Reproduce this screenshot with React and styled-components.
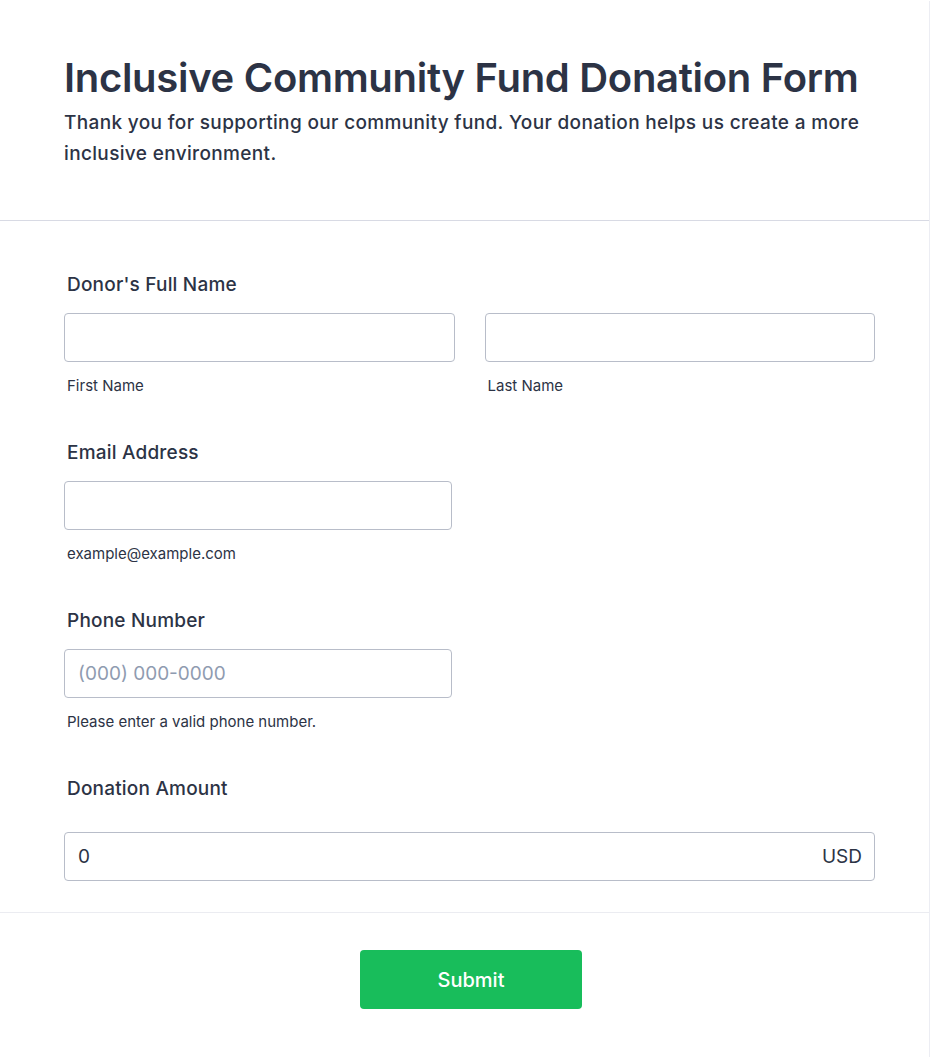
import React, { useState } from "react";
import styled, { createGlobalStyle } from "styled-components";

const GlobalStyle = createGlobalStyle`
  html, body {
    margin: 0;
    padding: 0;
    background: #ffffff;
  }
  * {
    box-sizing: border-box;
  }
  body {
    font-family: Inter, "Noto Sans", "Liberation Sans", sans-serif;
    color: #2c3345;
  }
`;

const Card = styled.div`
  width: 929px;
  min-height: 1057px;
  background: #fff;
  box-shadow: 1px 1px 0 #ecedf3;
`;

const Header = styled.header`
  padding: 54px 64px 51px;
  border-bottom: 1px solid #d8dae4;
`;

const Title = styled.h1`
  margin: 0;
  font-size: 40px;
  line-height: 48px;
  font-weight: 600;
  letter-spacing: -0.3px;
  color: #2c3345;
`;

const Subtitle = styled.p`
  margin: 5px 0 0;
  font-size: 19px;
  line-height: 31px;
  font-weight: 500;
  letter-spacing: 0.35px;
  color: #2c3345;
`;

const Body = styled.div`
  padding: 52px 54px 31px 64px;
  display: flex;
  flex-direction: column;
  gap: 45px;
`;

const Field = styled.div`
  display: flex;
  flex-direction: column;
`;

const Label = styled.label`
  padding-left: 3px;
  font-size: 19px;
  line-height: 24px;
  font-weight: 500;
  letter-spacing: 0.2px;
  margin-bottom: ${(p) => (p.$wide ? "31px" : "16px")};
`;

const Row = styled.div`
  display: grid;
  grid-template-columns: 1fr 1fr;
  column-gap: 30px;
`;

const Cell = styled.div`
  display: flex;
  flex-direction: column;
  width: ${(p) => p.$width || "auto"};
`;

const Input = styled.input`
  width: 100%;
  height: 49px;
  border: 1px solid #b8bdc9;
  border-radius: 4px;
  padding: 0 13px;
  font-family: inherit;
  font-size: 19px;
  color: #2c3345;
  background: #fff;
  outline: none;

  &::placeholder {
    color: #8f9bb0;
  }
`;

const Sub = styled.span`
  margin-top: 14px;
  padding-left: 3px;
  font-size: 15px;
  line-height: 20px;
  color: #2c3345;
`;

const AmountBox = styled.div`
  display: flex;
  align-items: center;
  height: 49px;
  border: 1px solid #b8bdc9;
  border-radius: 4px;
  padding: 0 12px 0 13px;
  font-size: 19px;
`;

const AmountInput = styled.input`
  flex: 1;
  border: none;
  outline: none;
  font-family: inherit;
  font-size: 19px;
  color: #2c3345;
  padding: 0;
  background: transparent;
`;

const Currency = styled.span`
  color: #2c3345;
`;

const Footer = styled.div`
  border-top: 1px solid #ebecf1;
  padding: 37px 51px 48px 64px;
  display: flex;
  justify-content: center;
`;

const SubmitButton = styled.button`
  width: 222px;
  height: 59px;
  border: none;
  border-radius: 4px;
  background: #18bd5b;
  color: #fff;
  font-family: inherit;
  font-size: 20px;
  font-weight: 500;
  cursor: pointer;
`;

const App = () => {
  const [first, setFirst] = useState("");
  const [last, setLast] = useState("");
  const [email, setEmail] = useState("");
  const [phone, setPhone] = useState("");
  const [amount, setAmount] = useState("0");

  return (
    <>
      <GlobalStyle />
      <Card>
        <Header>
          <Title>Inclusive Community Fund Donation Form</Title>
          <Subtitle>
            Thank you for supporting our community fund. Your donation helps us
            create a more inclusive environment.
          </Subtitle>
        </Header>

        <Body>
          <Field>
            <Label>Donor's Full Name</Label>
            <Row>
              <Cell>
                <Input value={first} onChange={(e) => setFirst(e.target.value)} />
                <Sub>First Name</Sub>
              </Cell>
              <Cell>
                <Input value={last} onChange={(e) => setLast(e.target.value)} />
                <Sub>Last Name</Sub>
              </Cell>
            </Row>
          </Field>

          <Field>
            <Label>Email Address</Label>
            <Cell $width="388px">
              <Input value={email} onChange={(e) => setEmail(e.target.value)} />
              <Sub>example@example.com</Sub>
            </Cell>
          </Field>

          <Field>
            <Label>Phone Number</Label>
            <Cell $width="388px">
              <Input
                placeholder="(000) 000-0000"
                value={phone}
                onChange={(e) => setPhone(e.target.value)}
              />
              <Sub>Please enter a valid phone number.</Sub>
            </Cell>
          </Field>

          <Field>
            <Label $wide>Donation Amount</Label>
            <AmountBox>
              <AmountInput value={amount} onChange={(e) => setAmount(e.target.value)} />
              <Currency>USD</Currency>
            </AmountBox>
          </Field>
        </Body>

        <Footer>
          <SubmitButton type="button">Submit</SubmitButton>
        </Footer>
      </Card>
    </>
  );
};

export default App;
